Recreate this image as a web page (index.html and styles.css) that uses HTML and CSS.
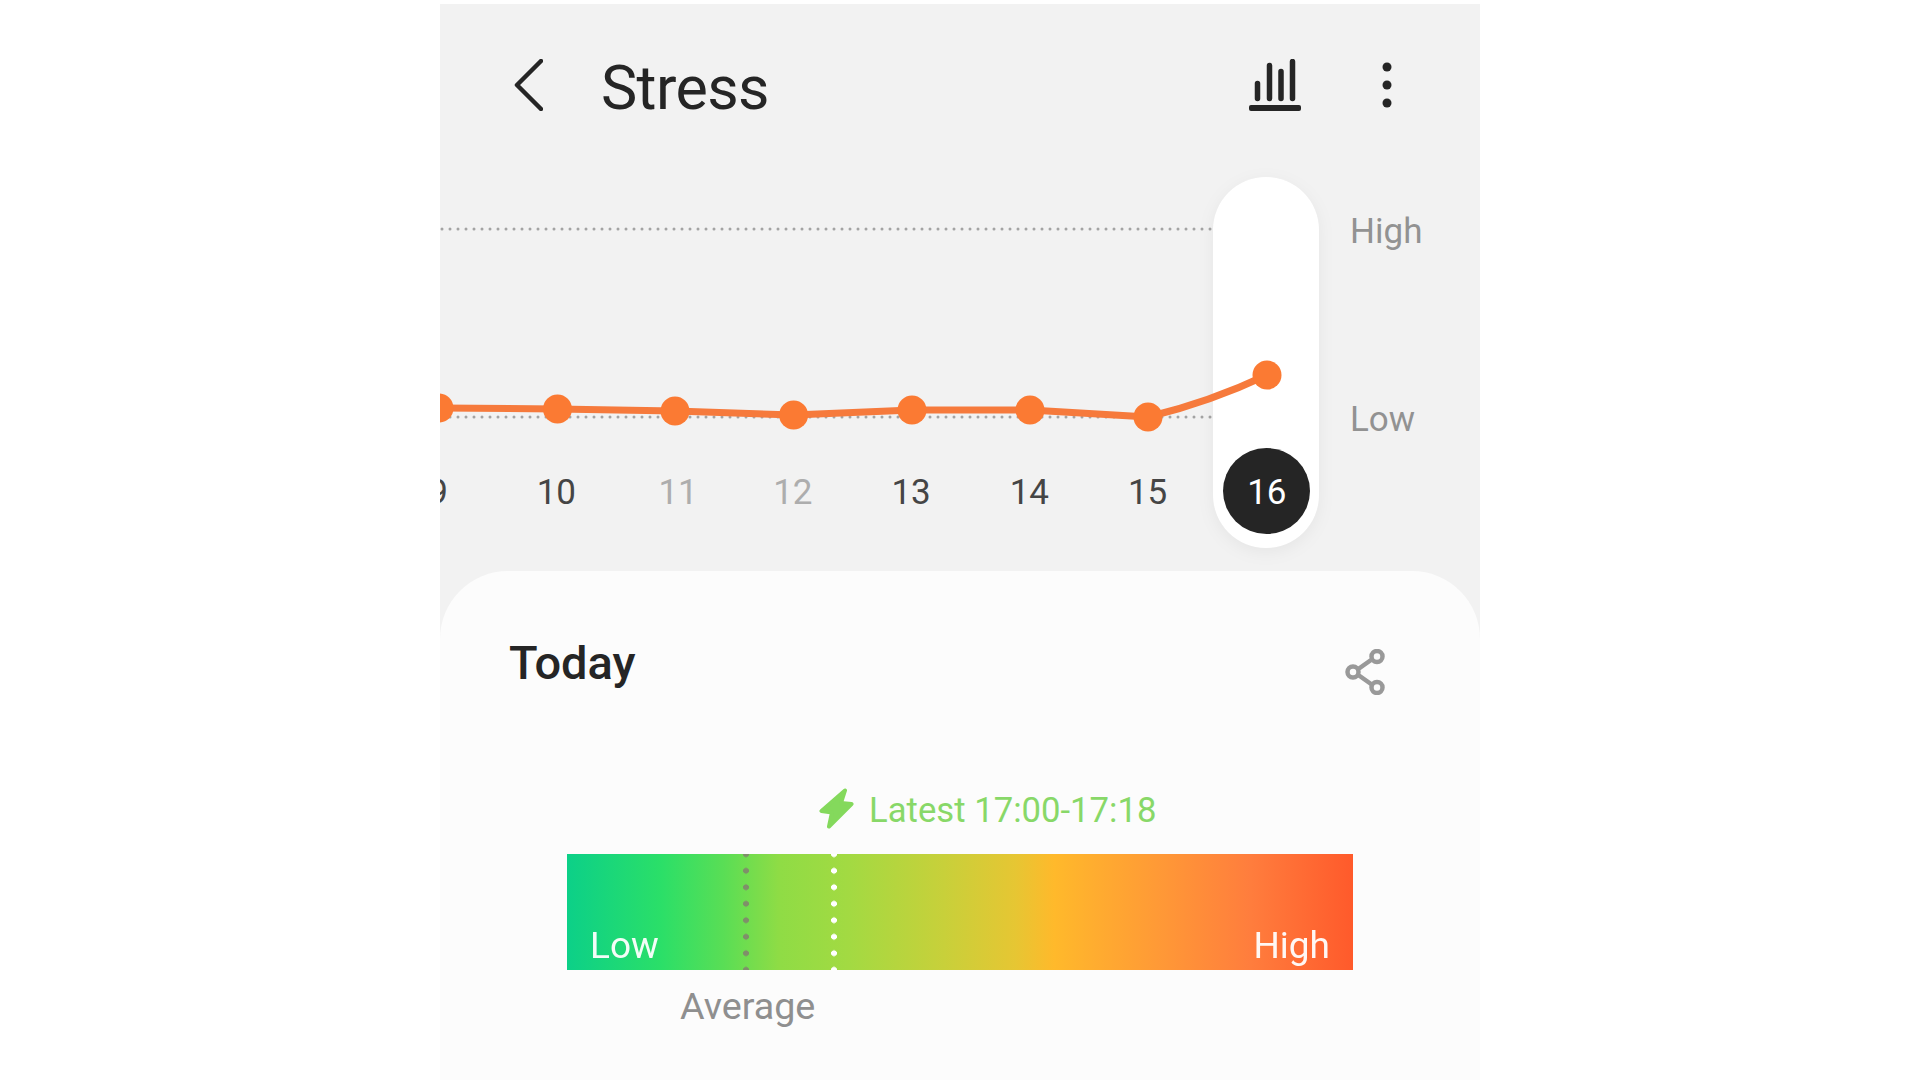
FILE: index.html
```html
<!DOCTYPE html>
<html lang="en">
<head>
<meta charset="utf-8">
<title>Stress</title>
<link rel="stylesheet" href="styles.css">
</head>
<body>
<main class="phone">
  <header class="topbar">
    <svg class="back" viewBox="0 0 29 52"><path d="M27 2 3 26l24 24"/></svg>
    <h1 class="title">Stress</h1>
    <svg class="bars" viewBox="0 0 52 52">
      <path class="bars-lines" d="M8.500 24.500v15M20.500 6.500v33M32 12.500v27M43.500 2.500v37"/>
      <rect class="bars-base" x="0" y="46" width="52" height="6" rx="2"/>
    </svg>
    <svg class="more" viewBox="0 0 10 46"><circle cx="5" cy="5" r="4.500"/><circle cx="5" cy="23" r="4.500"/><circle cx="5" cy="41" r="4.500"/></svg>
  </header>

  <section class="chart">
    <svg class="plot" viewBox="440 166 1040 405">
      <path class="grid" d="M442 229H1213M442 417H1213"/>
      <rect class="pill" x="1213" y="177" width="106" height="371" rx="53"/>
      <path class="line" d="M439 408 557.500 409 675 411 793.600 415 912 410 1030 410 1148 417Q1210 402 1267 375"/>
      <g class="points">
        <circle cx="439" cy="408" r="14.500"/><circle cx="557.500" cy="409" r="14.500"/>
        <circle cx="675" cy="411" r="14.500"/><circle cx="793.600" cy="415" r="14.500"/>
        <circle cx="912" cy="410" r="14.500"/><circle cx="1030" cy="410" r="14.500"/>
        <circle cx="1148" cy="417" r="14.500"/><circle cx="1267" cy="375" r="14.500"/>
      </g>
    </svg>
    <span class="level level-high">High</span>
    <span class="level level-low">Low</span>
    <div class="days">
      <span class="day">9</span>
      <span class="day">10</span>
      <span class="day day-muted day-ones">11</span>
      <span class="day day-muted">12</span>
      <span class="day">13</span>
      <span class="day">14</span>
      <span class="day">15</span>
      <span class="day day-current"><b class="day-badge">16</b></span>
    </div>
  </section>

  <section class="card">
    <div class="card-head">
      <h2 class="card-title">Today</h2>
      <svg class="share" viewBox="0 0 41 46">
        <path d="M26 11 14 19.500M14 26.500 26 35"/>
        <circle cx="32" cy="7.500" r="5.500"/><circle cx="8" cy="23" r="5.500"/><circle cx="32" cy="38.500" r="5.500"/>
      </svg>
    </div>
    <div class="latest">
      <svg class="bolt" viewBox="0 0 35 41"><path d="M26 2.500 2.500 23 13 24.500 10 38.500 32.500 16 22 15Z"/></svg>
      <span class="latest-text">Latest 17:00-17:18</span>
    </div>
    <div class="scale">
      <span class="mark mark-avg"></span>
      <span class="mark mark-now"></span>
      <span class="scale-label">Low</span>
      <span class="scale-label">High</span>
    </div>
    <div class="average">Average</div>
  </section>
</main>
</body>
</html>
```

FILE: styles.css
```css
* { box-sizing: border-box; }
html, body { margin: 0; height: 100%; }
body {
  background: #fff;
  display: flex;
  justify-content: center;
  padding-top: 4px;
  overflow: hidden;
  font-family: Roboto, "Liberation Sans", sans-serif;
}
.phone {
  width: 1040px;
  height: 1076px;
  background: #f2f2f2;
  display: flex;
  flex-direction: column;
  overflow: hidden;
}

/* header */
.topbar {
  height: 162px;
  flex: none;
  display: flex;
  align-items: center;
  padding: 0 88px 0 74px;
}
.back { width: 29px; height: 52px; flex: none; }
.back path { fill: none; stroke: #252525; stroke-width: 4.500; stroke-linecap: round; stroke-linejoin: round; }
.title {
  margin: 5px 0 0 58px;
  font-size: 61px;
  font-weight: 400;
  line-height: 60px;
  letter-spacing: -.6px;
  color: #252525;
}
.bars { width: 52px; height: 52px; margin-left: auto; flex: none; }
.bars-lines { fill: none; stroke: #252525; stroke-width: 5.500; stroke-linecap: round; }
.bars-base { fill: #252525; }
.more { width: 10px; height: 46px; margin-left: 81px; flex: none; }
.more circle { fill: #252525; }

/* chart */
.chart {
  position: relative;
  height: 405px;
  flex: none;
  display: flex;
  flex-direction: column;
  justify-content: flex-end;
  padding-bottom: 37px;
}
.plot { position: absolute; left: 0; top: 0; width: 1040px; height: 405px; }
.grid { fill: none; stroke: #a3a3a3; stroke-width: 3; stroke-linecap: round; stroke-dasharray: 0 8; }
.pill { fill: #fff; filter: drop-shadow(0 4px 8px rgba(0, 0, 0, .05)); }
.line { fill: none; stroke: #f67a3c; stroke-width: 7; stroke-linejoin: round; }
.points circle { fill: #fb7a33; }
.level {
  position: absolute;
  left: 910px;
  font-size: 35px;
  line-height: 36px;
  color: #929292;
}
.level-high { top: 48px; }
.level-low { top: 236px; }
.days {
  position: relative;
  display: flex;
  margin-left: -61px;
}
.day {
  width: 118.250px;
  height: 86px;
  flex: none;
  display: flex;
  align-items: center;
  justify-content: center;
  padding-top: 2px;
  font-size: 35px;
  color: #454545;
}
.day-muted { color: #adadad; }
.day-ones { padding-left: 7px; }
.day-current { padding-top: 0; }
.day-badge {
  width: 87px;
  height: 86px;
  margin-left: 2px;
  padding-top: 2px;
  border-radius: 50%;
  background: #252525;
  color: #fff;
  font-weight: 400;
  display: flex;
  align-items: center;
  justify-content: center;
}

/* card */
.card {
  flex: 1;
  background: #fcfcfc;
  border-radius: 68px 68px 0 0;
  padding: 69px 94px 0 69px;
}
.card-head {
  display: flex;
  justify-content: space-between;
  align-items: flex-start;
}
.card-title {
  margin: 0;
  font-size: 47px;
  line-height: 46px;
  font-weight: 500;
  color: #252525;
}
.share { width: 41px; height: 46px; margin-top: 9px; flex: none; }
.share path, .share circle { fill: none; stroke: #999; stroke-width: 4.500; }
.latest {
  display: flex;
  align-items: center;
  gap: 15px;
  margin: 91px 0 0 310px;
}
.bolt { width: 35px; height: 41px; flex: none; }
.bolt path { fill: #84d95c; stroke: #84d95c; stroke-width: 4; stroke-linejoin: round; }
.latest-text {
  font-size: 34.700px;
  line-height: 41px;
  padding-top: 4px;
  color: #88d868;
  white-space: nowrap;
}
.scale {
  position: relative;
  width: 786px;
  height: 116px;
  margin: 23px 0 0 58px;
  padding: 0 23px 6px;
  display: flex;
  justify-content: space-between;
  align-items: flex-end;
  background: linear-gradient(90deg, #0cd088 0%, #2bdf68 12%, #5ade55 20%, #8fdc45 27%, #a3da42 36%, #c8d03a 48%, #e6c633 57%, #ffb92b 62%, #ff9a36 75%, #ff7d3d 87%, #ff5a2b 100%);
}
.scale-label {
  font-size: 37px;
  line-height: 36px;
  color: #fff;
  opacity: .95;
}
.mark {
  position: absolute;
  top: -8px;
  bottom: 0;
  width: 6px;
  background-size: 6px 16.500px;
  background-repeat: repeat-y;
  clip-path: inset(8px 0 0 0);
}
.mark-avg {
  left: 176px;
  background-image: radial-gradient(circle at 3px 8.250px, #7f8f6a 2.700px, transparent 3.200px);
}
.mark-now {
  left: 264px;
  background-image: radial-gradient(circle at 3px 8.250px, #fff 2.700px, transparent 3.200px);
}
.average {
  margin: 18px 0 0 171px;
  font-size: 37.700px;
  line-height: 36px;
  color: #8f8f8f;
}
```
